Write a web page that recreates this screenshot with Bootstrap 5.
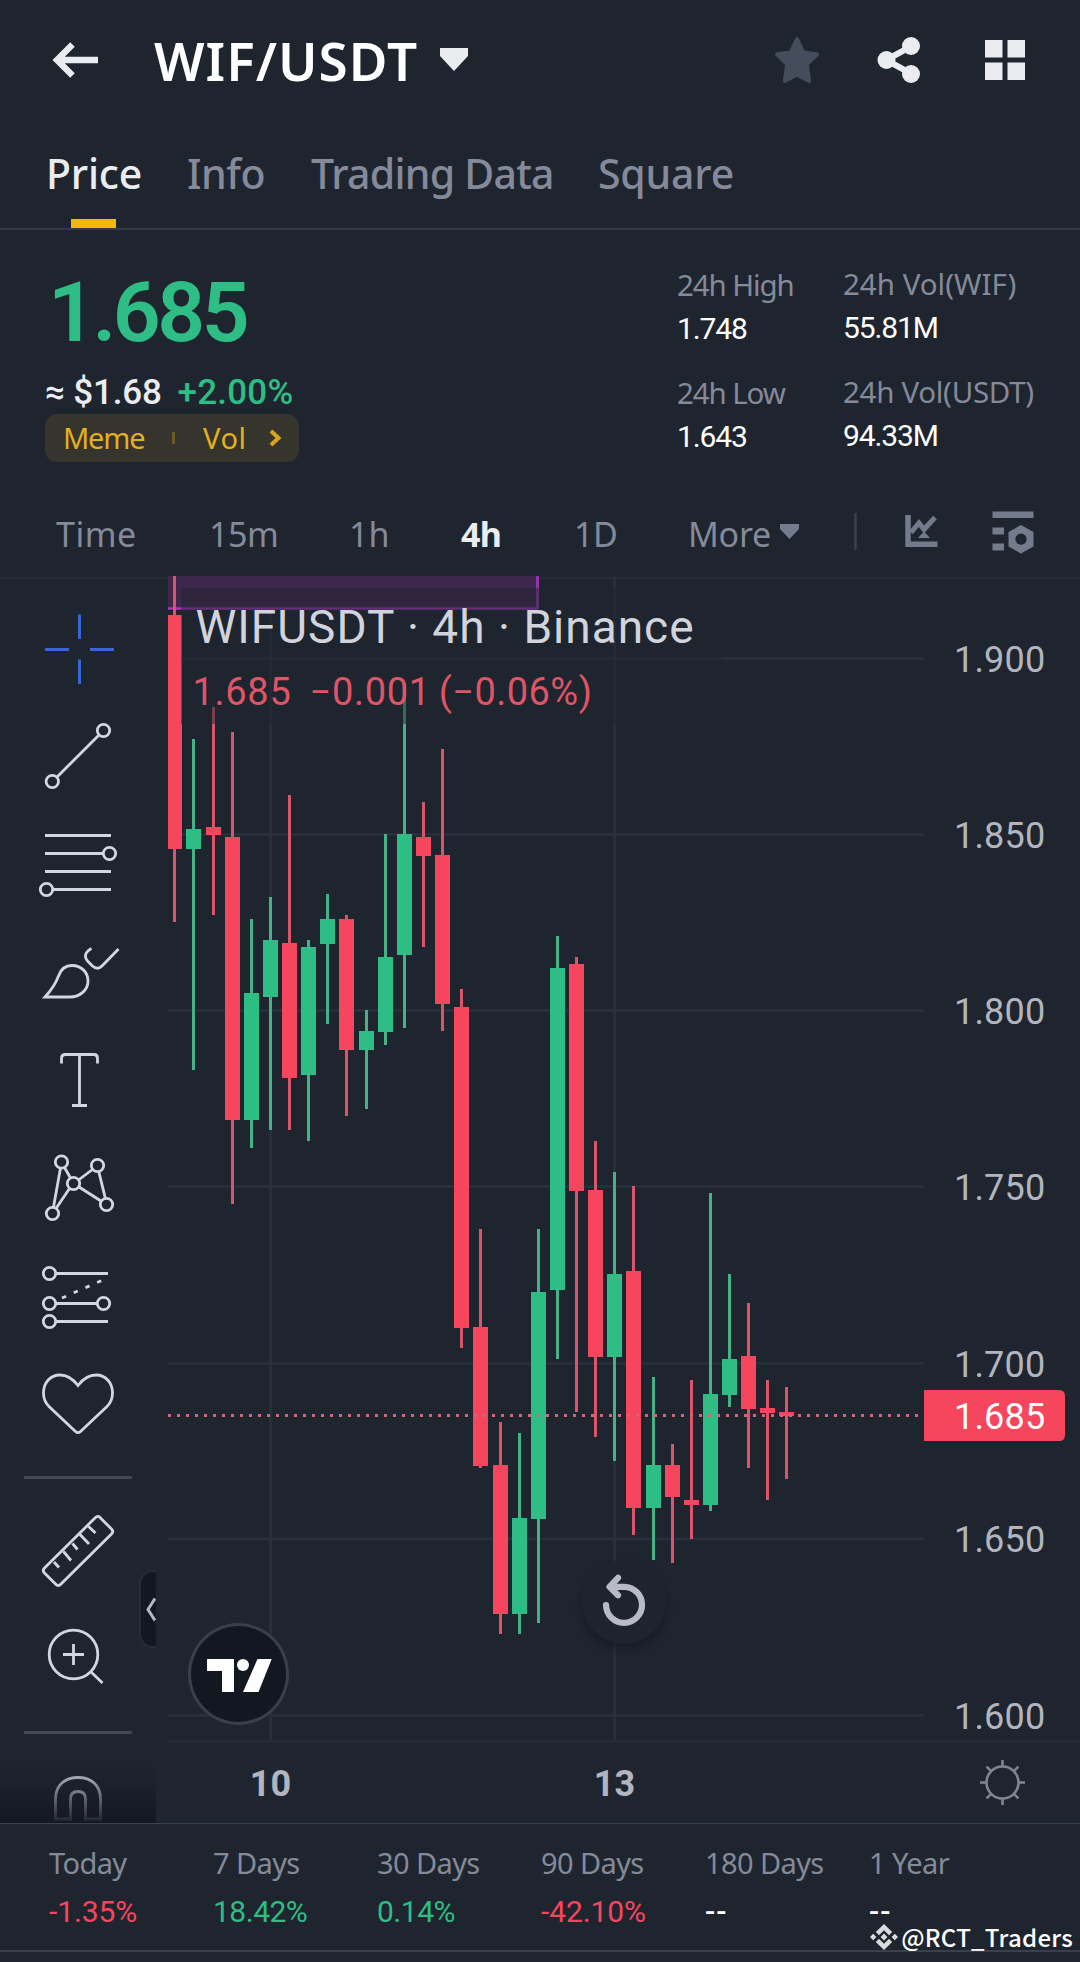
<!DOCTYPE html>
<html lang="en" data-bs-theme="dark">
<head>
<meta charset="utf-8">
<meta name="viewport" content="width=device-width, initial-scale=1">
<title>WIF/USDT</title>
<link href="https://cdn.jsdelivr.net/npm/bootstrap@5.3.0/dist/css/bootstrap.min.css" rel="stylesheet">
<style>
  :root { --bg:#1f252f; --fg:#eaecef; --dim:#848a99; --up:#2ebd85; --down:#f6465d; --gold:#f0b90b; --rule:#333a45; }
  body { background:var(--bg); color:var(--fg); font-family:"Noto Sans","Noto Sans CJK SC",sans-serif; }
  .screen { width:1080px; height:1962px; overflow:hidden; }
  .num { font-family:Roboto,"Noto Sans",sans-serif; }
  .up { color:var(--up); } .down { color:var(--down); }
  svg { display:block; flex:none; }

  .topbar { height:120px; padding-left:52px; }
  .pair { font-size:53px; font-weight:600; letter-spacing:1.04px; color:#fff; margin:2px 0 0 54px; line-height:60px; }
  .topbar .caret { margin:-1px 0 0 22px; }
  .actions { margin-left:auto; padding-right:54px; }

  .tabs { height:110px; border-bottom:2px solid var(--rule); }
  .tabs .nav-link { font-size:41px; line-height:107px; font-weight:500; color:var(--dim); padding:0; position:relative; white-space:nowrap; }
  .tabs .nav-link.active { color:var(--fg); letter-spacing:-.2px; }
  .tabs .nav-link.active::after { content:""; position:absolute; left:25px; top:99px; width:45px; height:9px; background:var(--gold); }

  .summary { height:261px; }
  .quote { width:677px; padding:41px 0 0 45px; }
  .last { font-size:84px; line-height:84px; font-weight:600; letter-spacing:-3.5px; margin-left:3px; }
  .fiat { font-size:35px; line-height:44px; font-weight:500; margin-top:16px; letter-spacing:-.2px; }
  .fiat .up { margin-left:16px; letter-spacing:.2px; }
  .tagbox { width:254px; height:48px; margin-top:-1px; border-radius:12px; background:#35342d; color:#e3b022; font-size:29px; line-height:48px; padding:0 17px 0 18px; }
  .tagbox i { width:3px; height:12px; background:#6b5a26; }
  .stats { padding-top:33px; font-size:29.5px; line-height:44px; white-space:nowrap; }
  .stats + .stats { padding-top:32px; }
  .stats dt { font-weight:400; color:var(--dim); }
  .stats dd { font-size:30px; letter-spacing:-1.1px; margin:0 0 20px; color:#fff; }

  .frames { height:88px; border-bottom:2px solid #262c37; font-size:34px; line-height:86px; color:var(--dim); }
  .frames .current { font-weight:700; color:var(--fg); }

  .board { height:1244px; }
  .tools { width:156px; height:1244px; position:relative; overflow:hidden; }
  .tools svg { stroke:#d3d6e0; stroke-width:2.8; fill:none; }
  .tools hr { width:108px; height:3px; margin:0 0 0 24px; border:0; background:#454852; opacity:1; }
  .tools .veil { position:absolute; left:0; right:0; bottom:0; height:62px; background:linear-gradient(rgba(20,23,33,0),rgba(20,23,33,.95)); }
  .tools .collapse-tab { position:absolute; left:139px; top:991px; width:19px; height:78px; background:#131722; border:2px solid #262c37; border-radius:14px 0 0 14px; }
  .plot { width:912px; height:1244px; margin-left:12px; }
  .plot svg { overflow:visible; }
  .plot text { font-family:Roboto,sans-serif; font-size:36px; fill:#b2b5be; }
  .legend { left:12.5px; top:9px; width:542px; height:136px; background:rgba(31,37,47,.5); color:#d1d4dc; }
  .legend .name { font-size:46px; line-height:56px; letter-spacing:1px; padding:11px 0 0 15px; white-space:nowrap; }
  .legend .chg { font-size:38px; line-height:50px; color:#de5568; padding-left:12px; margin-top:12px; letter-spacing:.7px; white-space:nowrap; }
  .tvmark { left:20px; top:1044px; width:101px; height:102px; border-radius:50%; background:#121722; border:3px solid #3a3f4a; }
  .reset { left:414px; top:981px; width:84px; height:84px; border-radius:50%; background:#1f232e; box-shadow:0 5px 8px rgba(10,12,20,.4); }

  .perf { height:129px; border-top:1px solid #3a424e; border-bottom:2px solid #39404b; padding:15px 0 0 49px; font-size:29px; line-height:48px; color:var(--dim); letter-spacing:-.6px; }
  .perf > div { width:164px; white-space:nowrap; }
  .perf .num { font-size:30px; line-height:50px; letter-spacing:-.1px; }
  .perf .num.up { letter-spacing:-.5px; }
  .perf .none { color:#fff; font-weight:500; letter-spacing:1px; }
  .handle { right:7px; bottom:7px; font:500 24px/36px "Noto Sans CJK SC",sans-serif; letter-spacing:.27px; color:#fff; }
</style>
</head>
<body>
<div class="screen position-relative">

  <header class="topbar d-flex align-items-center">
    <svg width="48" height="40" viewBox="52 40 48 40" fill="none" stroke="#eaecef" stroke-width="6.4"><path d="M98 60H57M72.500 44.500L57 60l15.500 15.500"/></svg>
    <h1 class="pair">WIF/USDT</h1>
    <svg class="caret" width="28" height="23" viewBox="0 0 28 23" fill="#eaecef"><path d="M0 0h28v8L14 23 0 8z"/></svg>
    <div class="actions d-flex align-items-center">
      <svg width="48" height="50" viewBox="773 36 48 50" fill="#454d5c" stroke="#454d5c" stroke-width="4" stroke-linejoin="round"><path d="M797 40l6.300 13.500 13.700 1.800-10.200 10.100 2.400 16.600-12.200-6.500-12.200 6.500 2.400-16.600-10.200-10.100 13.700-1.800z"/></svg>
      <svg width="44" height="48" viewBox="877 36 44 48" fill="#eaecef" stroke="#eaecef" style="margin-left:56px"><g stroke-width="6"><path fill="none" d="M911 46.500L886 60l25 13.500"/></g><g stroke="none"><circle cx="911" cy="46" r="9"/><circle cx="886.500" cy="60" r="9"/><circle cx="911" cy="74" r="9"/></g></svg>
      <svg width="41" height="40" viewBox="985 40 41 40" fill="#eaecef" style="margin-left:64px"><path d="M985 40h17.500v17.500H985zM1007.500 40h17.500v17.500h-17.500zM985 62.500h17.500V80H985zM1007.500 62.500h17.500V80h-17.500z"/></svg>
    </div>
  </header>

  <nav class="tabs nav flex-nowrap">
    <a class="nav-link active" style="margin-left:46px;width:141px">Price</a>
    <a class="nav-link" style="width:124px;letter-spacing:-.45px">Info</a>
    <a class="nav-link" style="width:287px;letter-spacing:-.75px">Trading Data</a>
    <a class="nav-link" style="letter-spacing:-.2px">Square</a>
  </nav>

  <section class="summary d-flex">
    <div class="quote">
      <div class="last num up">1.685</div>
      <div class="fiat num text-nowrap">≈ $1.68<span class="up">+2.00%</span></div>
      <div class="tagbox d-flex align-items-center">
        <span style="letter-spacing:-1.2px;width:109px">Meme</span><i></i><span style="letter-spacing:.6px;margin-left:28px;width:66px">Vol</span>
        <svg width="13" height="18" viewBox="0 0 13 18" fill="none" stroke="#d9a420" stroke-width="4"><path d="M2 2l7.500 7L2 16"/></svg>
      </div>
    </div>
    <dl class="stats mb-0" style="width:166px">
      <dt style="letter-spacing:-1.100px">24h High</dt><dd class="num">1.748</dd>
      <dt style="letter-spacing:-1.100px">24h Low</dt><dd class="num">1.643</dd>
    </dl>
    <dl class="stats mb-0">
      <dt style="letter-spacing:0">24h Vol(WIF)</dt><dd class="num">55.81M</dd>
      <dt style="letter-spacing:-.300px">24h Vol(USDT)</dt><dd class="num">94.33M</dd>
    </dl>
  </section>

  <section class="frames d-flex">
    <span style="margin-left:56px;width:153px;letter-spacing:.5px">Time</span>
    <span style="width:140px;letter-spacing:-.4px">15m</span>
    <span style="width:112px">1h</span>
    <span class="current" style="width:113px;letter-spacing:-.6px">4h</span>
    <span style="width:114px;letter-spacing:-.4px">1D</span>
    <span style="letter-spacing:-.250px">More</span>
    <svg style="margin:33px 0 0 9px" width="19" height="15" fill="#747b8c"><path d="M0 0h19v5L9.500 15 0 5z"/></svg>
    <svg class="ms-auto" width="190" height="86" viewBox="850 491 190 86" style="margin-right:40px">
      <path d="M855.500 513v37" stroke="#3a414d" stroke-width="2.500"/>
      <g fill="none" stroke="#747b8c" stroke-width="5.500"><path d="M908 515v29.300h29.500"/><path d="M911 532.500l8-9.500 5 6.500 11-12" stroke-width="5"/></g>
      <path d="M924 531.500l6 6.500h-12z" fill="#747b8c"/>
      <path d="M992.500 511.500h41v6.500h-41zM992.500 527.500h11.500v7h-11.500zM992.500 543.500h11.500v7h-11.500z" fill="#747b8c"/>
      <path fill-rule="evenodd" fill="#747b8c" d="M1021 525l12.500 7v14.500l-12.500 7-12.500-7V532zM1021 533.600a5.600 5.600 0 1 0 .01 0z"/>
    </svg>
  </section>

  <main class="board d-flex">
    <aside class="tools d-flex flex-column">
      <svg width="156" height="125" viewBox="0 579 156 125" style="stroke:#3965d6"><path d="M79.500 614.500v24.500M79.500 659.500V684M45 649.500h24M90 649.500h24" stroke-width="3"/></svg>
      <svg width="156" height="104" viewBox="0 704 156 104"><circle cx="103.500" cy="730.500" r="6.200"/><circle cx="52.300" cy="781.500" r="6.200"/><path d="M57 777l42-42"/></svg>
      <svg width="156" height="112" viewBox="0 808 156 112"><path d="M45 835.500h66M45 853.500h58M45 871.500h66M53 889.500h58"/><circle cx="109.500" cy="853.500" r="6.200"/><circle cx="46.500" cy="889.500" r="6.200"/></svg>
      <svg width="156" height="110" viewBox="0 920 156 110"><path d="M45 997H70C80 997 88 990 88 981C88 972 81 965.500 72 965.500C64 965.500 60.500 970 58.500 976C55.500 984 51 990.500 45 997z"/><path d="M91.500 948.500C85 952 83.500 957 88 961.500L92.500 966Q97.500 970.500 102 966L118.500 949"/></svg>
      <svg width="156" height="98" viewBox="0 1030 156 98"><path d="M61.500 1063.500v-5q0-4 4-4h28.500q3.500 0 3.500 4v5M79.500 1054.500v51M72 1105.500h15"/></svg>
      <svg width="156" height="117" viewBox="0 1128 156 117"><path d="M60.500 1168l-7 39M64.500 1167.500l6 10.500M69.500 1188.500l-13.500 20M78.500 1180l14-10.500M98.800 1171.700l6.500 26.500M79 1187l22 14"/><circle cx="61.500" cy="1162" r="6.200"/><circle cx="97.500" cy="1165.500" r="6.200"/><circle cx="73.500" cy="1183.500" r="6.200"/><circle cx="106.500" cy="1204.500" r="6.200"/><circle cx="52.500" cy="1213.500" r="6.200"/></svg>
      <svg width="156" height="105" viewBox="0 1245 156 105"><circle cx="49.500" cy="1273.500" r="6.200"/><circle cx="49.500" cy="1303.500" r="6.200"/><circle cx="103.500" cy="1303.500" r="6.200"/><circle cx="49.500" cy="1321.500" r="6.200"/><path d="M56 1273.500h52M56 1303.500h41M56 1321.500h52"/><path d="M62 1298l42-18.500" stroke-dasharray="4.500 8.300"/></svg>
      <svg width="156" height="126" viewBox="0 1350 156 126"><path d="M78 1385.500C73 1379 67.500 1375 60 1375C50 1375 43.500 1383 43.500 1393C43.500 1399 45.500 1403 49 1406.500L75.500 1431.500Q78 1433.800 80.500 1431.500L107 1406.500C110.500 1403 112.500 1399 112.500 1393C112.500 1383 106 1375 96 1375C88.500 1375 83 1379 78 1385.500z"/></svg>
      <hr>
      <svg width="156" height="131" viewBox="0 1479 156 131"><path d="M95.500 1517.500L44.500 1568Q42 1570.500 44.500 1573L55.500 1584Q58.300 1587 61 1584L111.500 1534Q114 1531.500 111.500 1529L100.500 1518Q98 1515 95.500 1517.500zM54 1562l5 5.500M63.500 1551.500l7.500 9M72.500 1543.500l5 6M80 1534.500l9 9.500M88.500 1526.500l7 6.500"/></svg>
      <svg width="156" height="121" viewBox="0 1610 156 121"><circle cx="73.500" cy="1654.500" r="24.300"/><path d="M63 1654.500h21M73.500 1644v21M90.500 1671.500l12 11.500"/></svg>
      <hr>
      <svg width="156" height="89" viewBox="0 1734 156 89"><path d="M55.500 1821v-22C55.500 1785 65 1777.500 78 1777.500S100.500 1785 100.500 1799v22M70.500 1821v-22c0-5 3-7.500 7.500-7.500s7.500 2.500 7.500 7.500v22M55.500 1819h15M85.500 1819h15"/></svg>
      <div class="veil"></div>
      <div class="collapse-tab"><svg width="16" height="74" viewBox="142 1572 16 74" style="stroke:#b2b9c6;stroke-width:3"><path d="M156 1598.500l-7 11 7 11"/></svg></div>
    </aside>

    <div class="plot position-relative">
      <svg id="chart" width="912" height="1244" viewBox="168 579 912 1244"></svg>

      <div class="legend num position-absolute">
        <div class="name">WIFUSDT · 4h · Binance</div>
        <div class="chg"><span>1.685</span><span style="margin-left:18px">−0.001</span><span style="margin-left:8px;letter-spacing:.450px">(−0.06%)</span></div>
      </div>
      <div class="tvmark position-absolute">
        <svg width="95" height="96" viewBox="191 1626 95 96" fill="#fff"><path d="M207 1659h27v33h-12v-21h-15zM257.500 1659h14.200l-13.200 33H243z"/><circle cx="243" cy="1665" r="6"/></svg>
      </div>
      <div class="reset position-absolute">
        <svg width="84" height="84" viewBox="582 1560 84 84" fill="none" stroke="#b8bbc6" stroke-width="6.200" stroke-linecap="round" stroke-linejoin="round"><path d="M606 1605.200A18 18 0 1 0 624 1586.800H611M618 1577.800l-8.500 9 8.500 8.500"/></svg>
      </div>
    </div>
  </main>

  <section class="perf d-flex">
    <div>Today<div class="num down">-1.35%</div></div>
    <div>7 Days<div class="num up">18.42%</div></div>
    <div>30 Days<div class="num up">0.14%</div></div>
    <div>90 Days<div class="num down">-42.10%</div></div>
    <div>180 Days<div class="num none">--</div></div>
    <div>1 Year<div class="num none">--</div></div>
  </section>

  <div class="handle position-absolute d-flex align-items-center">
    <svg width="28" height="28" viewBox="0 0 28 28" fill="#d9dbde" style="margin-right:3px"><path d="M14 1l8.200 8-3.200 3.200-5-5-5 5L5.800 9zM14 27l8.200-8-3.200-3.200-5 5-5-5L5.800 19zM14 10.600l3.400 3.400-3.400 3.400-3.400-3.400zM3.200 10.800L6.400 14l-3.200 3.200L0 14zM24.800 10.800L28 14l-3.200 3.200-3.200-3.200z"/></svg>
    <span>@RCT_Traders</span>
  </div>
</div>

<script src="https://cdn.jsdelivr.net/npm/bootstrap@5.3.0/dist/js/bootstrap.bundle.min.js"></script>
<script>
  // [centre x, wick top, body top, body bottom, wick bottom, rising]
  const candles = [
    [174.5,576,615,849,922,0],[193.5,739,829,849,1070,1],[213.5,707,827,835,915,0],[232.5,732,837,1120,1204,0],
    [251.500,919,993,1120,1148,1],[270.500,897,940,997,1130,1],[289.500,795,943,1078,1130,0],[308.500,940,947,1075,1141,1],
    [327.500,894,919,944,1024,1],[346.500,915,919,1050,1116,0],[366.500,1010,1031,1050,1109,1],[385.500,834,957,1032,1045,1],
    [404.500,683,834,955,1028,1],[423.500,802,837,856,947,0],[442.500,749,855,1004,1031,0],[461.500,989,1007,1328,1348,0],
    [480.500,1229,1327,1466,1468,0],[500.500,1422,1465,1614,1634,0],[519.500,1433,1518,1614,1634,1],[538.500,1229,1292,1519,1623,1],
    [557.500,936,968,1290,1359,1],[576.500,957,964,1191,1412,0],[595.500,1141,1190,1357,1437,0],[614.500,1172,1274,1357,1461,1],
    [633.500,1186,1271,1508,1535,0],[653.500,1377,1465,1508,1560,1],[672.500,1444,1465,1497,1563,0],[691.500,1380,1500,1505,1539,0],
    [710.500,1193,1394,1505,1511,1],[729.500,1274,1359,1395,1407,1],[748.500,1303,1356,1409,1468,0],[767.500,1380,1408,1413,1500,0],
    [786.500,1387,1412,1416,1479,0]
  ];
  const grid = [[658.5,'1.900'],[834.5,'1.850'],[1010.5,'1.800'],[1186.5,'1.750'],[1363.5,'1.700'],[1539,'1.650'],[1715.5,'1.600']];
  let s = '<g stroke="#2b313c" stroke-width="2.400">';
  for (const [y] of grid) s += `<path d="M168 ${y}H924"/>`;
  for (const x of [270.5, 614.5]) s += `<path d="M${x} 576V1740"/>`;
  s += '<path d="M168 1741.500H1080" stroke="#272d38"/></g>';
  s += '<path d="M168 576H539V609H168z" fill="#3e274c"/>'
     + '<path d="M168 608.500H538" stroke="#a838bd" stroke-width="2.500"/><path d="M537.500 576V609" stroke="#9534aa" stroke-width="3"/>';
  for (const [x, hi, top, bot, lo, rise] of candles) {
    const left = Math.max(168, x - 7.5);
    s += `<path d="M${x} ${hi}V${lo}" stroke="${rise ? '#46b087' : '#d9566a'}" stroke-width="3"/>`
       + `<path d="M${left} ${top}H${x + 7.5}V${bot}H${left}z" fill="${rise ? '#2ebd85' : '#f6465d'}"/>`;
  }
  s += '<path d="M168 1415.500H924" stroke="#dc6072" stroke-width="3" stroke-dasharray="3 6"/>';
  for (const [y, label] of grid) s += `<text x="954" y="${y + 13}" letter-spacing=".2">${label}</text>`;
  s += '<path d="M924 1390H1059q6 0 6 6v39q0 6-6 6H924z" fill="#f6465d"/><text x="954" y="1429" letter-spacing=".2" style="fill:#fff">1.685</text>';
  s += '<text x="270.500" y="1796" text-anchor="middle" font-weight="700">10</text><text x="614.500" y="1796" text-anchor="middle" font-weight="700">13</text>';
  s += '<g fill="none" stroke="#80848f" stroke-width="2.600"><circle cx="1002.500" cy="1782.500" r="16"/>';
  for (let a = 0; a < 360; a += 45) s += `<path d="M1002.500 1766.500v-6.500" transform="rotate(${a} 1002.500 1782.500)"/>`;
  document.getElementById('chart').innerHTML = s + '</g>';
</script>
</body>
</html>
